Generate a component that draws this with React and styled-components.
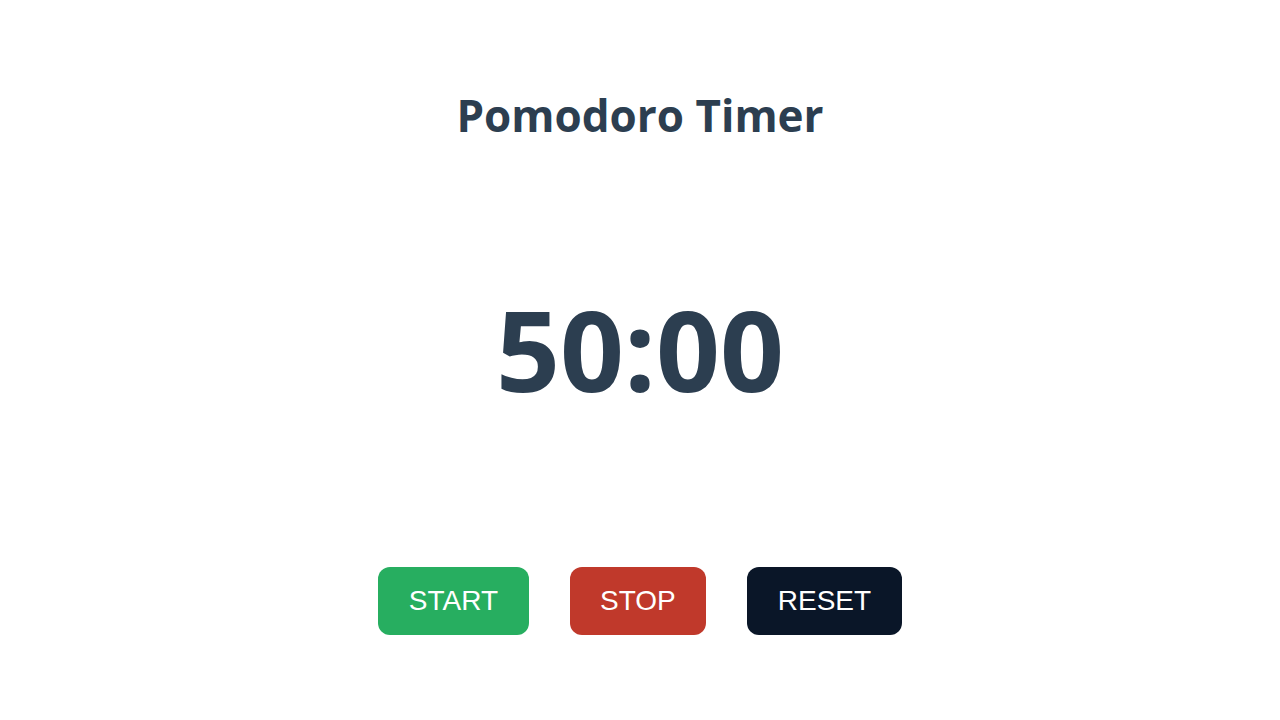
import React from 'react';
import styled, { createGlobalStyle } from 'styled-components';

const GlobalStyle = createGlobalStyle`
  html, body {
    margin: 0;
    padding: 0;
    background: #ffffff;
  }
  body {
    font-family: 'Open Sans', 'Noto Sans', sans-serif;
  }
`;

const Page = styled.main`
  width: 1280px;
  height: 720px;
  display: flex;
  flex-direction: column;
  align-items: center;
  box-sizing: border-box;
  padding-top: 83px;
`;

const Title = styled.h1`
  margin: 0;
  font-family: 'Open Sans', sans-serif;
  font-weight: 700;
  font-size: 44px;
  line-height: 64px;
  color: #2c3e50;
`;

const Clock = styled.div`
  margin-top: 127px;
  font-family: 'Open Sans', sans-serif;
  font-weight: 700;
  font-size: 112px;
  line-height: 150px;
  color: #2c3e50;
`;

const ButtonRow = styled.div`
  margin-top: 143px;
  display: flex;
  gap: 41px;
`;

const Button = styled.button`
  border: none;
  border-radius: 12px;
  padding: 18px 30.5px;
  font-family: 'Liberation Sans', Arial, sans-serif;
  font-size: 28px;
  line-height: 32px;
  color: #ffffff;
  background: ${(props) => props.$bg};
  cursor: pointer;
`;

const App = () => {
  return (
    <>
      <GlobalStyle />
      <Page>
        <Title>Pomodoro Timer</Title>
        <Clock>50:00</Clock>
        <ButtonRow>
          <Button $bg="#27ae60">START</Button>
          <Button $bg="#c0392b">STOP</Button>
          <Button $bg="#0a1628">RESET</Button>
        </ButtonRow>
      </Page>
    </>
  );
};

export default App;
